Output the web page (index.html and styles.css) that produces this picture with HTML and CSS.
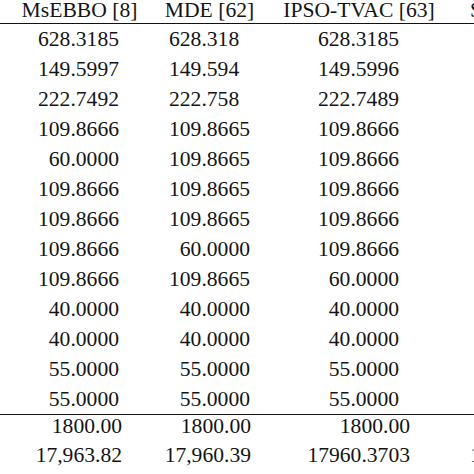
FILE: index.html
```html
<!DOCTYPE html>
<html>
<head>
<meta charset="utf-8">
<link rel="stylesheet" href="styles.css">
</head>
<body>
<table class="results">
  <colgroup>
    <col class="c1"><col class="c2"><col class="c3"><col class="c4">
  </colgroup>
  <thead>
    <tr><th>MsEBBO [8]</th><th>MDE [62]</th><th>IPSO-TVAC [63]</th><th class="last">SSA [64]</th></tr>
  </thead>
  <tbody>
    <tr><td>628.3185</td><td>628.318<span class="pad">0</span></td><td>628.3185</td><td></td></tr>
    <tr><td>149.5997</td><td>149.594<span class="pad">0</span></td><td>149.5996</td><td></td></tr>
    <tr><td>222.7492</td><td>222.758<span class="pad">0</span></td><td>222.7489</td><td></td></tr>
    <tr><td>109.8666</td><td>109.8665</td><td>109.8666</td><td></td></tr>
    <tr><td>60.0000</td><td>109.8665</td><td>109.8666</td><td></td></tr>
    <tr><td>109.8666</td><td>109.8665</td><td>109.8666</td><td></td></tr>
    <tr><td>109.8666</td><td>109.8665</td><td>109.8666</td><td></td></tr>
    <tr><td>109.8666</td><td>60.0000</td><td>109.8666</td><td></td></tr>
    <tr><td>109.8666</td><td>109.8665</td><td>60.0000</td><td></td></tr>
    <tr><td>40.0000</td><td>40.0000</td><td>40.0000</td><td></td></tr>
    <tr><td>40.0000</td><td>40.0000</td><td>40.0000</td><td></td></tr>
    <tr><td>55.0000</td><td>55.0000</td><td>55.0000</td><td></td></tr>
    <tr><td>55.0000</td><td>55.0000</td><td>55.0000</td><td></td></tr>
  </tbody>
  <tfoot>
    <tr class="first"><td>1800.00</td><td>1800.00</td><td>1800.00</td><td class="last"></td></tr>
    <tr class="second"><td>17,963.82</td><td>17,960.39</td><td>17960.3703</td><td class="last">17,960.37</td></tr>
  </tfoot>
</table>
</body>
</html>
```

FILE: styles.css
```css
html, body {
  margin: 0;
  padding: 0;
  background: #ffffff;
  overflow: hidden;
  width: 474px;
  height: 474px;
}

.results {
  font-family: "Liberation Serif", "Times New Roman", serif;
  font-size: 21.6px;
  color: #141414;
  border-collapse: collapse;
  table-layout: fixed;
  width: 600px;
}

.c1 { width: 159px; }
.c2 { width: 101px; }
.c3 { width: 198px; }
.c4 { width: 142px; }

.results th {
  font-weight: normal;
  text-align: center;
  line-height: 20px;
  padding: 0 0 2.5px 0;
  border-bottom: 1.7px solid #111;
  white-space: nowrap;
}

.results th.last {
  text-align: left;
  padding-left: 12px;
}

.results td {
  padding: 0;
  line-height: 30px;
  text-align: right;
  white-space: nowrap;
}

.results tbody td:nth-child(1) { padding-right: 40px; }
.results tbody td:nth-child(2) { padding-right: 10px; }
.results tbody td:nth-child(3) { padding-right: 59px; }

.results tfoot td {
  line-height: 22px;
}

.results tfoot tr.first td {
  border-top: 1.7px solid #111;
}

.results tfoot tr.second td {
  padding-top: 7px;
}

.results tfoot td:nth-child(1) { padding-right: 37px; }
.results tfoot td:nth-child(2) { padding-right: 9px; }
.results tfoot td:nth-child(3) { padding-right: 48px; }

.results tfoot td.last {
  text-align: left;
  padding-left: 12px;
  padding-right: 0;
}

.pad {
  visibility: hidden;
}
```
